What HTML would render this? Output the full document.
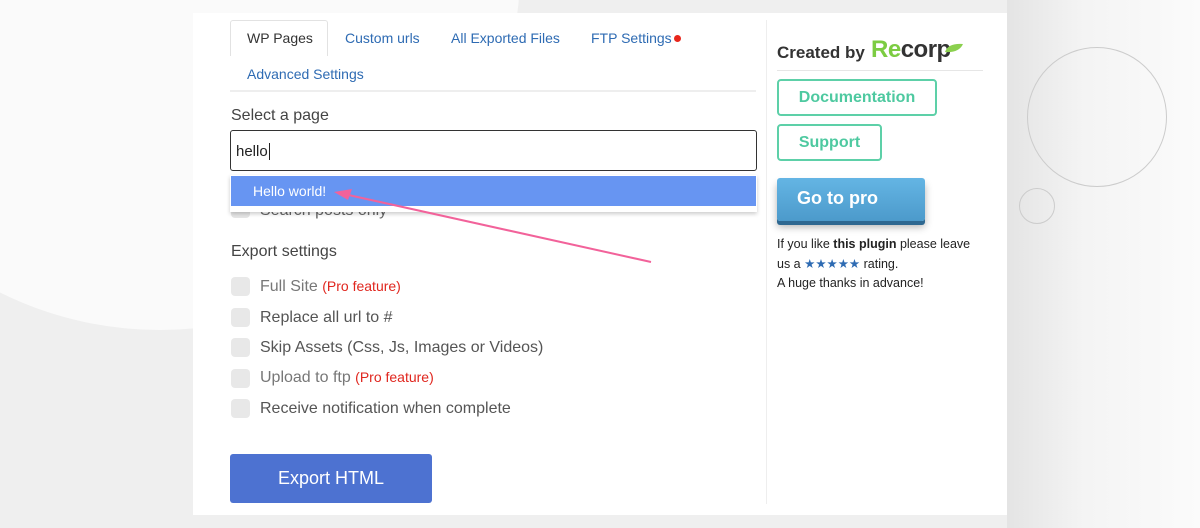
<!DOCTYPE html>
<html><head><style>
*{box-sizing:border-box;margin:0;padding:0}
body{width:1200px;height:528px;overflow:hidden;background:#efefef;font-family:"Liberation Sans",Arial,sans-serif;position:relative}
.blob{position:absolute;left:-200px;top:-300px;width:720px;height:630px;border-radius:0 0 360px 360px;background:#fafafa}
.rbg{position:absolute;left:1007px;top:0;width:193px;height:528px;background:linear-gradient(90deg,#e4e4e4,#f4f4f4 40%,#fbfbfb)}
.panel{position:absolute;left:193px;top:13px;width:814px;height:502px;background:#fff}
.abs{position:absolute}
.tab{position:absolute;font-size:14px;color:#2e6bb3}
.cb{position:absolute;left:231px;width:19px;height:19px;border-radius:4px;background:#e8e8e8}
.lbl{position:absolute;left:260px;font-size:16px;color:#555}
.pro{color:#e0261e;font-size:14px}
.gbtn{position:absolute;left:777px;border:2px solid #5dd0a8;border-radius:4px;color:#4ec9a0;font-weight:bold;font-size:16px;text-align:center}
</style></head><body>
<div class="blob"></div>
<div class="rbg"></div>
<svg class="abs" style="left:1010px;top:40px" width="190" height="190"><circle cx="87" cy="77" r="69.5" fill="none" stroke="#ccc"/><circle cx="27" cy="166" r="17.5" fill="none" stroke="#ccc"/></svg>
<div class="panel"></div>
<div class="abs" style="left:230px;top:20px;width:98px;height:36px;border:1px solid #e2e2e2;border-bottom:none;border-radius:3px 3px 0 0;background:#fff"></div>
<div class="tab" style="left:247px;top:30px;color:#333">WP Pages</div>
<div class="tab" style="left:345px;top:30px">Custom urls</div>
<div class="tab" style="left:451px;top:30px">All Exported Files</div>
<div class="tab" style="left:591px;top:30px">FTP Settings</div>
<div class="abs" style="left:674px;top:35px;width:7px;height:7px;border-radius:50%;background:#e8261c"></div>
<div class="tab" style="left:247px;top:66px">Advanced Settings</div>
<div class="abs" style="left:230px;top:90px;width:526px;height:2px;background:#eee"></div>
<div class="abs" style="left:231px;top:107px;font-size:16px;color:#444">Select a page</div>
<div class="abs" style="left:230px;top:130px;width:527px;height:41px;border:1px solid #333;border-radius:3px;font-size:15px;color:#222;padding:12px 5px">hello<span style="border-left:1px solid #222;margin-left:1px"></span></div>
<div class="abs" style="left:231px;top:199px;width:19px;height:19px;border-radius:4px;background:#e6e6e6"></div>
<div class="abs" style="left:260px;top:202px;font-size:16px;color:#666">Search posts only</div>
<div class="abs" style="left:230px;top:175px;width:527px;height:37px;background:#fff;box-shadow:0 2px 4px rgba(0,0,0,.2)"></div>
<div class="abs" style="left:231px;top:176px;width:525px;height:30px;background:#6795f2;color:#fff;font-size:14px;padding:7px 22px">Hello world!</div>
<svg class="abs" style="left:320px;top:180px" width="340" height="90"><line x1="331" y1="82" x2="24" y2="14" stroke="#f2629a" stroke-width="2"/><polygon points="14,12 32,9 28,20" fill="#f2629a"/></svg>
<div class="abs" style="left:231px;top:243px;font-size:16px;color:#444">Export settings</div>
<div class="cb" style="top:277px"></div><div class="lbl" style="top:278px;color:#777">Full Site <span class="pro">(Pro feature)</span></div>
<div class="cb" style="top:308px"></div><div class="lbl" style="top:309px">Replace all url to #</div>
<div class="cb" style="top:338px"></div><div class="lbl" style="top:339px">Skip Assets (Css, Js, Images or Videos)</div>
<div class="cb" style="top:369px"></div><div class="lbl" style="top:369px;color:#777">Upload to ftp <span class="pro">(Pro feature)</span></div>
<div class="cb" style="top:399px"></div><div class="lbl" style="top:400px">Receive notification when complete</div>
<div class="abs" style="left:230px;top:454px;width:202px;height:49px;border-radius:3px;background:#4d72d1;color:#fff;font-size:18px;text-align:center;line-height:49px">Export HTML</div>
<div class="abs" style="left:766px;top:20px;width:1px;height:484px;background:#eee"></div>
<div class="abs" style="left:777px;top:43px;font-size:17px;font-weight:bold;color:#333">Created by</div>
<div class="abs" style="left:871px;top:36px;font-size:24px;font-weight:bold;letter-spacing:-0.5px"><span style="color:#7ccc42">Re</span><span style="color:#333">corp</span></div>
<svg class="abs" style="left:944px;top:42px" width="20" height="12"><path d="M1 10 Q4 1 19 2 Q15 11 1 10Z" fill="#8bd04e"/></svg>
<div class="abs" style="left:777px;top:70px;width:206px;height:1px;background:#e6e6e6"></div>
<div class="gbtn" style="top:79px;width:160px;height:37px;line-height:33px">Documentation</div>
<div class="gbtn" style="top:124px;width:105px;height:37px;line-height:33px">Support</div>
<div class="abs" style="left:777px;top:178px;width:148px;height:43px;border-radius:3px;background:linear-gradient(#64b5e4,#4c9acb);box-shadow:0 4px 0 #2e6891,0 6px 8px rgba(0,0,0,.3);color:#fff;font-weight:bold;font-size:18px;line-height:40px;padding-left:20px">Go to pro</div>
<div class="abs" style="left:777px;top:235px;font-size:12.5px;color:#222;line-height:19.5px">If you like <b>this plugin</b> please leave<br>us a <span style="color:#2e6bb3">★★★★★</span> rating.<br>A huge thanks in advance!</div>
</body></html>
